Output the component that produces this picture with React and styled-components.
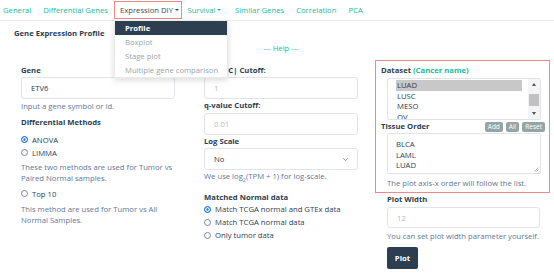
import React from 'react'
import styled, { createGlobalStyle, css } from 'styled-components'
import { ChevronDown } from 'lucide-react'

const GlobalStyle = createGlobalStyle`
  body {
    margin: 0;
    background: #fff;
    color: #2c3e50;
    font-family: "Open Sans", "Liberation Sans", sans-serif;
    font-size: 7.7px;
  }
  * { box-sizing: border-box; }
`

const Nav = styled.nav`
  display: flex;
  align-items: center;
  height: 21px;
  border-bottom: 1px solid #e8ebee;
`

const NavItem = styled.div`
  position: relative;
  display: flex;
  align-items: center;
  height: 20px;
  &:first-child a { padding-left: 3px; }
`

const NavLink = styled.a`
  display: flex;
  align-items: center;
  height: 18px;
  padding: 0 ${p => p.$pr ?? 6}px 0 6px;
  color: #18bc9c;
  text-decoration: none;
  white-space: nowrap;
  ${p => p.$active && css`
    border: 1px solid #f08a8a;
    padding: 0 2px 0 5px;
    color: #3d4a56;
  `}
`

const Caret = styled.span`
  display: inline-block;
  margin-left: 1.5px;
  border-top: 2.5px solid currentColor;
  border-left: 2px solid transparent;
  border-right: 2px solid transparent;
`

const Menu = styled.div`
  position: absolute;
  top: 20px;
  left: 0;
  width: 114px;
  background: #fff;
  border: 1px solid rgba(0, 0, 0, 0.08);
  box-shadow: 0 2px 6px rgba(0, 0, 0, 0.15);
  z-index: 10;
`

const MenuItem = styled.div`
  height: 14px;
  line-height: 14px;
  padding-left: 10px;
  color: #98a4ab;
  white-space: nowrap;
  ${p => p.$active && css`
    background: #2c3e50;
    color: #fff;
    font-weight: 700;
  `}
`

const Main = styled.main`
  padding-left: 14px;
`

const Title = styled.h4`
  margin: 6px 0 0;
  font-size: 7.7px;
  line-height: 12px;
  font-weight: 700;
  color: #2c3e50;
`

const Help = styled.div`
  margin-top: 3px;
  line-height: 12px;
  text-align: center;
  color: #18bc9c;
  padding-right: 6px;
`

const Grid = styled.div`
  display: grid;
  grid-template-columns: 183px 171px 175px;
  margin: 6px 0 0 7px;
`

const Column = styled.div`
  display: flex;
  flex-direction: column;
  padding-top: ${p => p.$pt ?? 4}px;
  padding-right: ${p => p.$pr ?? 0}px;
`

const Label = styled.label`
  display: block;
  font-weight: 700;
  line-height: 12px;
  color: #2c3e50;
  margin: ${p => p.$m || '0'};
`

const Accent = styled.span`
  color: #18bc9c;
`

const Input = styled.input`
  display: block;
  width: ${p => p.$w || '100%'};
  height: ${p => p.$h || 22}px;
  margin: ${p => p.$m || '0'};
  padding: 0 9px;
  border: 1px solid #e0e4e8;
  border-radius: 3px;
  font: inherit;
  font-size: 7.7px;
  color: #2c3e50;
  outline: none;
  &::placeholder { color: #b3bcc4; }
`

const SelectBox = styled.div`
  display: flex;
  align-items: center;
  justify-content: space-between;
  height: 22px;
  margin-top: 1px;
  padding: 0 7px 0 9px;
  border: 1px solid #e0e4e8;
  border-radius: 3px;
  color: #2c3e50;
`

const HelpText = styled.div`
  line-height: 11px;
  color: #62789a;
  margin: ${p => p.$m || '0'};
`

const RadioList = styled.div`
  display: flex;
  flex-direction: column;
  margin: ${p => p.$m || '0'};
`

const RadioRow = styled.div`
  display: flex;
  align-items: center;
  gap: 4px;
  height: 13px;
  color: #2c3e50;
`

const RadioDot = styled.span`
  width: 7px;
  height: 7px;
  border-radius: 50%;
  border: 1px solid #7d8a96;
  ${p => p.$checked && css`
    border-color: #1a73e8;
    background: #1a73e8;
    box-shadow: inset 0 0 0 1.3px #fff;
  `}
`

const RedBox = styled.div`
  border: 1px solid #f08a8a;
  padding: 3px 0 3px 5px;
`

const ListBox = styled.div`
  display: flex;
  height: 42px;
  margin: 2px 8px 0 6px;
  border: 1px solid #e0e4e8;
  border-radius: 2px;
  overflow: hidden;
`

const Options = styled.div`
  flex: 1;
  padding: 1px 6px 0 8px;
`

const Option = styled.div`
  height: 10.5px;
  line-height: 10.5px;
  padding-left: 1px;
  color: #2c3e50;
  ${p => p.$selected && css`background: #c8c8c8;`}
`

const Scrollbar = styled.div`
  width: 12px;
  display: flex;
  flex-direction: column;
  align-items: center;
  background: #f4f4f4;
`

const Arrow = styled.span`
  margin: ${p => (p.$down ? '3px 0 4px' : '4px 0 3px')};
  border-left: 2.5px solid transparent;
  border-right: 2.5px solid transparent;
  ${p => (p.$down ? 'border-top: 3px solid #505050;' : 'border-bottom: 3px solid #505050;')}
`

const Track = styled.div`
  flex: 1;
  width: 100%;
  padding-top: 5px;
`

const Thumb = styled.div`
  height: 12px;
  margin: 0 1px;
  background: #c1c1c1;
`

const OrderRow = styled.div`
  display: flex;
  align-items: flex-end;
  justify-content: space-between;
  height: 12px;
  margin-right: 4px;
`

const SmallButtons = styled.div`
  display: flex;
  gap: 3px;
`

const SmallButton = styled.button`
  height: 10px;
  padding: 0 3px;
  border: none;
  border-radius: 2px;
  background: #95a5a6;
  color: #fff;
  font: inherit;
  font-size: 6.5px;
  line-height: 10px;
`

const TextArea = styled.div`
  position: relative;
  height: 41px;
  margin: 1px 8px 0 6px;
  padding: 5px 8px 0;
  border: 1px solid #e0e4e8;
  border-radius: 2px;
  line-height: 10.5px;
  color: #2c3e50;
`

const Grip = styled.svg`
  position: absolute;
  right: 1px;
  bottom: 1px;
`

const PlotButton = styled.button`
  width: 31px;
  height: 22px;
  margin: 5px 0 0 12px;
  border: none;
  border-radius: 2px;
  background: #2c3e50;
  color: #fff;
  font: inherit;
  font-weight: 700;
  font-size: 7.7px;
`

export default function App() {
  const navItems = ['General', 'Differential Genes']
  return (
    <>
      <GlobalStyle />
      <Nav>
        {navItems.map(n => (
          <NavItem key={n}><NavLink>{n}</NavLink></NavItem>
        ))}
        <NavItem>
          <NavLink $active>Expression DIY<Caret /></NavLink>
          <Menu>
            <MenuItem $active>Profile</MenuItem>
            <MenuItem>Boxplot</MenuItem>
            <MenuItem>Stage plot</MenuItem>
            <MenuItem>Multiple gene comparison</MenuItem>
          </Menu>
        </NavItem>
        <NavItem><NavLink $pr={8}>Survival<Caret /></NavLink></NavItem>
        <NavItem><NavLink>Similar Genes</NavLink></NavItem>
        <NavItem><NavLink>Correlation</NavLink></NavItem>
        <NavItem><NavLink>PCA</NavLink></NavItem>
      </Nav>
      <Main>
        <Title>Gene Expression Profile</Title>
        <Help>--- Help ---</Help>
        <Grid>
          <Column $pr={29}>
            <Label $m="0 0 1px">Gene</Label>
            <Input defaultValue="ETV6" />
            <HelpText $m="2px 0 0">Input a gene symbol or id.</HelpText>
            <Label $m="4px 0 0">Differential Methods</Label>
            <RadioList $m="5px 0 0">
              <RadioRow><RadioDot $checked />ANOVA</RadioRow>
              <RadioRow><RadioDot />LIMMA</RadioRow>
            </RadioList>
            <HelpText $m="3px 0 0">These two methods are used for Tumor vs Paired Normal samples.</HelpText>
            <RadioList $m="3px 0 0">
              <RadioRow><RadioDot />Top 10</RadioRow>
            </RadioList>
            <HelpText $m="4px 0 0">This method are used for Tumor vs All Normal Samples.</HelpText>
          </Column>
          <Column $pr={17}>
            <Label $m="0 0 1px">|log2FC| Cutoff:</Label>
            <Input placeholder="1" />
            <Label $m="0 0 2px">q-value Cutoff:</Label>
            <Input placeholder="0.01" />
            <Label>Log Scale</Label>
            <SelectBox>
              No
              <ChevronDown size={9} strokeWidth={1.6} color="#555" />
            </SelectBox>
            <HelpText $m="1px 0 0">We use log<sub style={{ fontSize: 5.5 }}>2</sub>(TPM + 1) for log-scale.</HelpText>
            <Label $m="5px 0 0">Matched Normal data</Label>
            <RadioList>
              <RadioRow><RadioDot $checked />Match TCGA normal and GTEx data</RadioRow>
              <RadioRow><RadioDot />Match TCGA normal data</RadioRow>
              <RadioRow><RadioDot />Only tumor data</RadioRow>
            </RadioList>
          </Column>
          <Column $pt={0}>
            <RedBox>
              <Label>Dataset <Accent>(Cancer name)</Accent></Label>
              <ListBox>
                <Options>
                  <Option $selected>LUAD</Option>
                  <Option>LUSC</Option>
                  <Option>MESO</Option>
                  <Option>OV</Option>
                </Options>
                <Scrollbar>
                  <Arrow />
                  <Track><Thumb /></Track>
                  <Arrow $down />
                </Scrollbar>
              </ListBox>
              <OrderRow>
                <Label>Tissue Order</Label>
                <SmallButtons>
                  <SmallButton>Add</SmallButton>
                  <SmallButton>All</SmallButton>
                  <SmallButton>Reset</SmallButton>
                </SmallButtons>
              </OrderRow>
              <TextArea>
                <div>BLCA</div>
                <div>LAML</div>
                <div>LUAD</div>
                <Grip width="5" height="5" viewBox="0 0 5 5">
                  <path d="M0.5 4.5 L4.5 0.5 M2.5 4.5 L4.5 2.5" stroke="#999" strokeWidth="0.7" />
                </Grip>
              </TextArea>
              <HelpText $m="4px 0 0 6px">The plot axis-x order will follow the list.</HelpText>
            </RedBox>
            <Label $m="0 0 2px 12px">Plot Width</Label>
            <Input placeholder="12" $w="153px" $h={21} $m="0 0 0 12px" />
            <HelpText $m="3px 0 0 12px">You can set plot width parameter yourself.</HelpText>
            <PlotButton>Plot</PlotButton>
          </Column>
        </Grid>
      </Main>
    </>
  )
}
